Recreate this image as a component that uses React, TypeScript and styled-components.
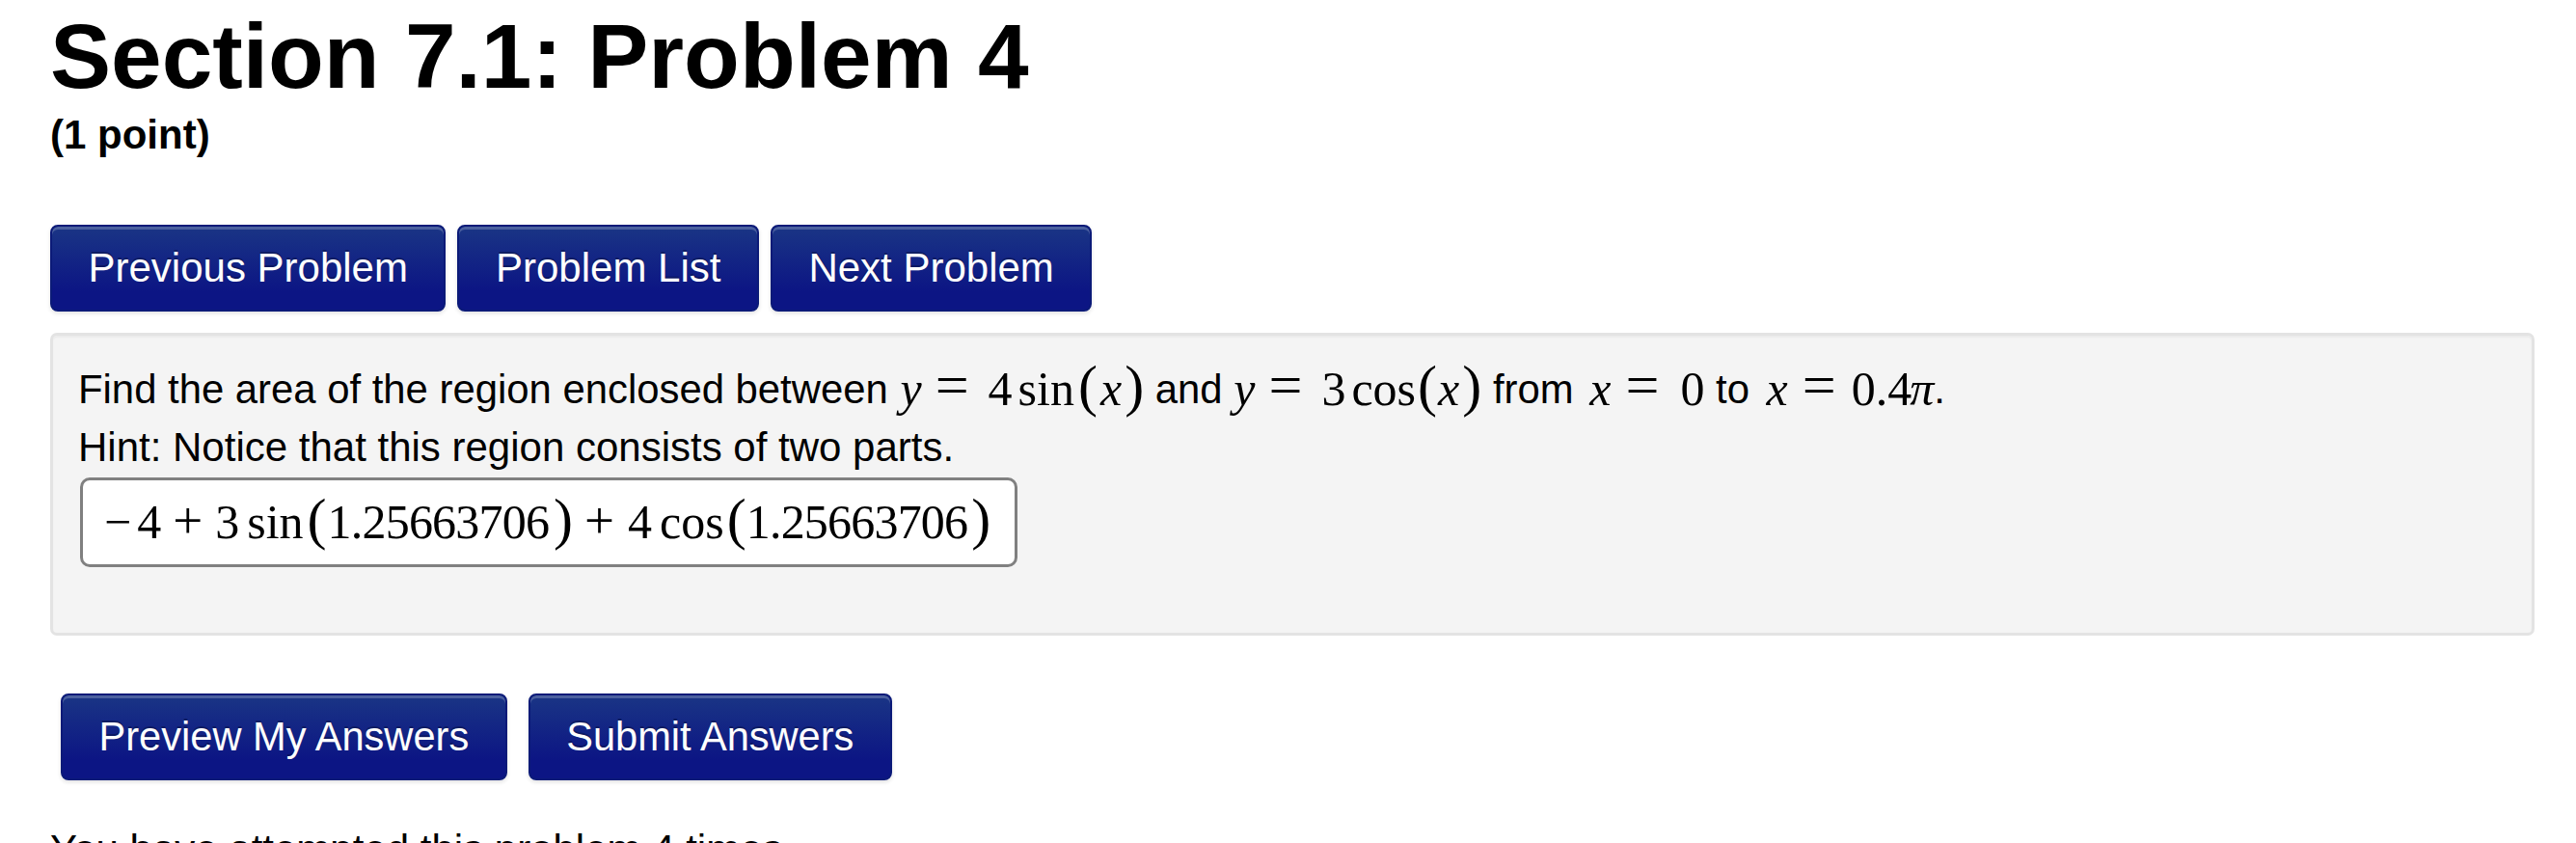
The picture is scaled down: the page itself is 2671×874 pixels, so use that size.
import styled, { createGlobalStyle } from "styled-components";

const GlobalStyle = createGlobalStyle`
  html, body {
    margin: 0;
    height: 100%;
    overflow: hidden;
    background: #fff;
    font-family: "Liberation Sans", Arial, sans-serif;
    color: #000;
  }
`;

const Page = styled.div`
  padding: 0 43px 0 52px;
`;

const Title = styled.h1`
  margin: 0;
  padding-top: 7px;
  font-size: 94.6px;
  line-height: 102px;
  font-weight: 700;
`;

const Points = styled.div`
  margin-top: 7px;
  font-size: 42px;
  line-height: 48px;
  font-weight: 700;
`;

const ButtonRow = styled.div<{ $gap: number; $indent?: number }>`
  display: flex;
  gap: ${(p) => p.$gap}px;
  padding-left: ${(p) => p.$indent ?? 0}px;
`;

const NavRow = styled(ButtonRow)`
  margin-top: 69px;
`;

const SubmitRow = styled(ButtonRow)`
  margin-top: 60px;
`;

const Button = styled.div`
  box-sizing: border-box;
  height: 90px;
  padding: 0 37.5px;
  display: flex;
  align-items: center;
  border: 2px solid #0b1a78;
  border-radius: 8px;
  background: linear-gradient(to bottom, #1a3585 0%, #0c1584 78%, #0c1584 100%);
  box-shadow: inset 0 3px 0 rgba(255, 255, 255, 0.22), 0 2px 4px rgba(0, 0, 0, 0.12);
  color: #fff;
  font-size: 42px;
  text-shadow: 0 -2px 0 rgba(0, 0, 0, 0.25);
  white-space: nowrap;
`;

const SubmitButton = styled(Button)`
  font-size: 41.6px;
`;

const Panel = styled.div`
  box-sizing: border-box;
  margin-top: 22px;
  height: 314px;
  padding: 26px 26px;
  border: 3px solid #e3e3e3;
  border-radius: 7px;
  background: #f4f4f4;
  box-shadow: inset 0 2px 2px rgba(0, 0, 0, 0.04);
  font-size: 41.85px;
  line-height: 60px;
`;

const Line = styled.div`
  white-space: nowrap;
`;

const HintLine = styled(Line)`
  font-size: 42px;
`;

// inline formula, sized like MathJax output next to the 42px body text
const Formula = styled.span`
  font-family: "Liberation Serif", "Times New Roman", serif;
  font-size: 50px;
  line-height: 0;
  vertical-align: -2px;
`;

const Var = styled.i<{ $ml?: number }>`
  margin-left: ${(p) => p.$ml ?? 0}px;
`;

const Rel = styled.span<{ $ml?: number; $mr?: number }>`
  font-size: 62px;
  line-height: 0;
  margin-left: ${(p) => p.$ml ?? 14}px;
  margin-right: ${(p) => p.$mr ?? 20}px;
`;

const Fn = styled.span<{ $ml?: number }>`
  margin-left: ${(p) => p.$ml ?? 8}px;
`;

const Paren = styled.span<{ $ml?: number }>`
  font-size: 60px;
  line-height: 0;
  margin-left: ${(p) => p.$ml ?? 2}px;
`;

const Digit = styled.span<{ $ml?: number }>`
  margin-left: ${(p) => p.$ml ?? 0}px;
`;

const Plus = styled.span<{ $ml?: number; $mr?: number }>`
  font-size: 55px;
  line-height: 0;
  margin-left: ${(p) => p.$ml ?? 12}px;
  margin-right: ${(p) => p.$mr ?? 13}px;
`;

const Num = styled.span<{ $ml?: number }>`
  letter-spacing: -0.8px;
  margin-left: ${(p) => p.$ml ?? 0}px;
`;

const AnswerBox = styled.div`
  box-sizing: border-box;
  width: 972px;
  height: 93px;
  margin: 1px 0 0 2px;
  padding: 0 22px;
  border: 3px solid #808080;
  border-radius: 10px;
  background: #fff;
  font-family: "Liberation Serif", "Times New Roman", serif;
  font-size: 50px;
  line-height: 87px;
  white-space: nowrap;
`;

const Attempts = styled.div`
  margin-top: 48px;
  font-size: 42px;
  line-height: 48px;
`;

const App = () => {
  return (
    <>
      <GlobalStyle />
      <Page>
        <Title>Section 7.1: Problem 4</Title>
        <Points>(1 point)</Points>
        <NavRow $gap={12}>
          <Button>Previous Problem</Button>
          <Button>Problem List</Button>
          <Button>Next Problem</Button>
        </NavRow>
        <Panel>
          <Line>
            Find the area of the region enclosed between{" "}
            <Formula>
              <Var $ml={1}>y</Var>
              <Rel>=</Rel>4<Fn $ml={6}>sin</Fn>
              <Paren $ml={4}>(</Paren>
              <Var $ml={3}>x</Var>
              <Paren $ml={3}>)</Paren>
            </Formula>{" "}
            and{" "}
            <Formula>
              <Var>y</Var>
              <Rel>=</Rel>3<Fn $ml={6}>cos</Fn>
              <Paren>(</Paren>
              <Var $ml={1}>x</Var>
              <Paren $ml={3}>)</Paren>
            </Formula>{" "}
            from{" "}
            <Formula>
              <Var $ml={5}>x</Var>
              <Rel $ml={15} $mr={22}>=</Rel>0
            </Formula>{" "}
            to{" "}
            <Formula>
              <Var $ml={6}>x</Var>
              <Rel $ml={15} $mr={16}>=</Rel>0.4<Var $ml={-2}>π</Var>
            </Formula>
            .
          </Line>
          <HintLine>Hint: Notice that this region consists of two parts.</HintLine>
          <AnswerBox>
            −<Digit $ml={6}>4</Digit>
            <Plus>+</Plus>3<Fn>sin</Fn>
            <Paren $ml={4}>(</Paren>
            <Num $ml={1}>1.25663706</Num>
            <Paren $ml={5}>)</Paren>
            <Plus $mr={14}>+</Plus>4<Fn>cos</Fn>
            <Paren $ml={3}>(</Paren>
            <Num>1.25663706</Num>
            <Paren $ml={4}>)</Paren>
          </AnswerBox>
        </Panel>
        <SubmitRow $gap={22} $indent={11}>
          <SubmitButton>Preview My Answers</SubmitButton>
          <SubmitButton>Submit Answers</SubmitButton>
        </SubmitRow>
        <Attempts>You have attempted this problem 4 times.</Attempts>
      </Page>
    </>
  );
};

export default App;
